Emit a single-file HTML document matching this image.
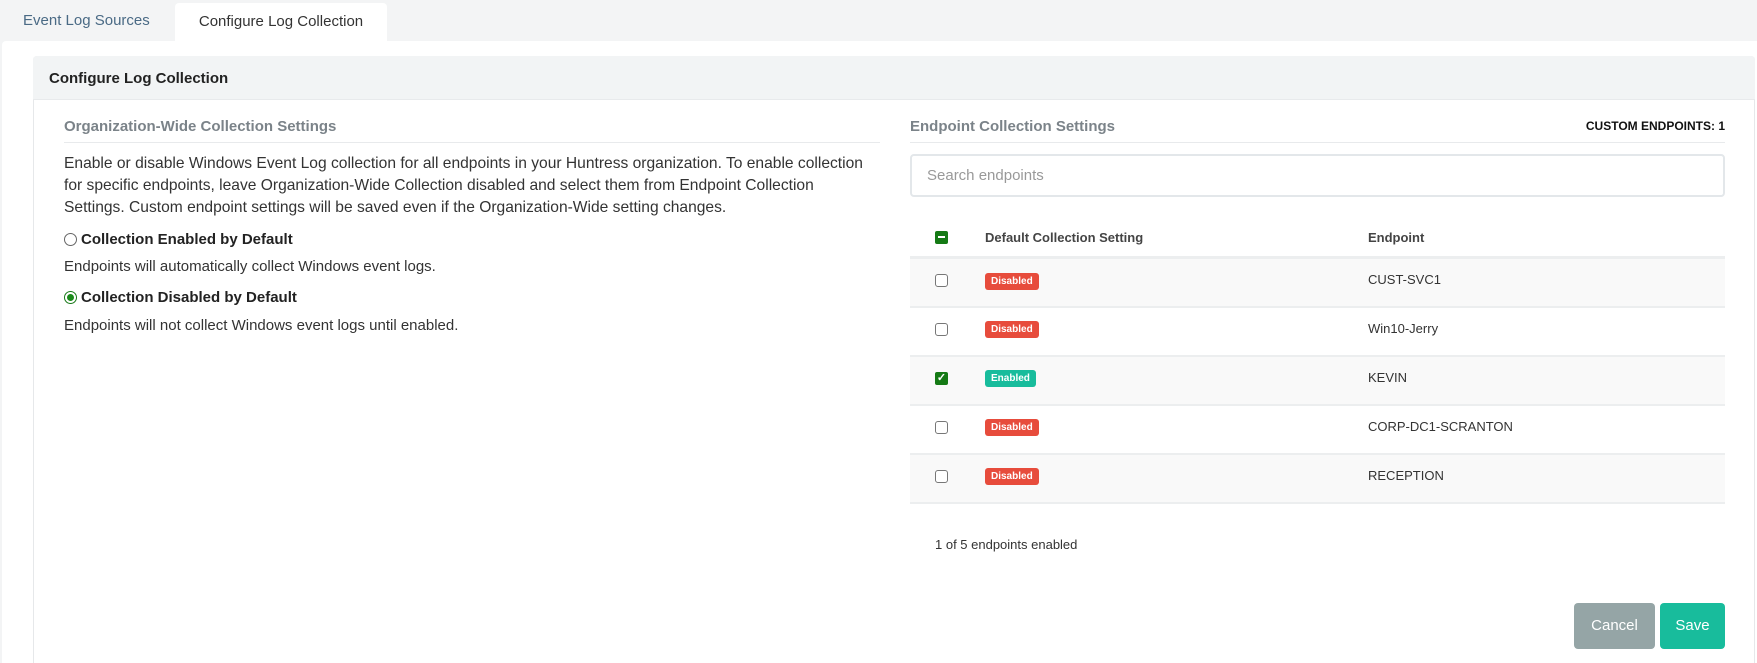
<!DOCTYPE html>
<html><head><meta charset="utf-8"><style>
*{box-sizing:border-box;margin:0;padding:0}
html{height:663px;overflow:hidden}
body{width:1757px;height:663px;overflow:hidden;background:#f3f4f5;font-family:"Liberation Sans",sans-serif;color:#333;position:relative}
.abs{position:absolute}
.tab1{left:23px;top:12px;font-size:15px;color:#4a6a85}
.tab2{left:175px;top:3px;width:212px;height:39px;background:#fff;border-radius:4px 4px 0 0;font-size:15px;color:#333;text-align:center;line-height:38px}
.main{left:2px;top:41px;width:1755px;height:622px;background:#fff;border-radius:4px 0 0 0}
.card{left:33px;top:56px;width:1722px;height:607px;border:1px solid #e6e8ea;border-bottom:none;border-radius:4px 4px 0 0;background:#fff}
.chead{left:33px;top:56px;width:1722px;height:44px;background:#f2f4f5;border-bottom:1px solid #e8eaec;border-radius:4px 4px 0 0;font-weight:bold;font-size:15px;padding:14px 0 0 16px;color:#222}
.h4{font-size:15px;font-weight:bold;color:#7b8389}
.line{height:1px;background:#e8eaec}
p{font-size:15px;line-height:22px;white-space:nowrap}
.badge{display:inline-block;height:17px;line-height:17px;font-size:10px;font-weight:bold;color:#fff;padding:0 6px;border-radius:3px}
.dis{background:#e74c3c}.en{background:#18bc9c}
.cb{width:13px;height:13px;border:1px solid #777;border-radius:3px;background:#fff}
.row{left:910px;width:815px;height:49px}
.btn{height:46px;line-height:46px;color:#fff;font-size:15px;text-align:center;border-radius:4px}
</style></head><body>
<div class="abs tab1">Event Log Sources</div>
<div class="abs tab2">Configure Log Collection</div>
<div class="abs main"></div>
<div class="abs card"></div>
<div class="abs chead">Configure Log Collection</div>

<div class="abs h4" style="left:64px;top:118px">Organization-Wide Collection Settings</div>
<div class="abs line" style="left:64px;top:142px;width:816px"></div>
<p class="abs" style="left:64px;top:153px;font-size:15.6px">Enable or disable Windows Event Log collection for all endpoints in your Huntress organization. To enable collection<br>for specific endpoints, leave Organization-Wide Collection disabled and select them from Endpoint Collection<br>Settings. Custom endpoint settings will be saved even if the Organization-Wide setting changes.</p>
<div class="abs" style="left:64px;top:233px;width:13px;height:13px;border:1px solid #666;border-radius:50%"></div>
<div class="abs" style="left:81px;top:231px;font-size:15px;font-weight:bold;color:#222">Collection Enabled by Default</div>
<p class="abs" style="left:64px;top:256px">Endpoints will automatically collect Windows event logs.</p>
<div class="abs" style="left:64px;top:291px;width:13px;height:13px;border:1px solid #1a7a1a;border-radius:50%;background:#fff"><div style="margin:2px;width:7px;height:7px;border-radius:50%;background:#1a8a1a"></div></div>
<div class="abs" style="left:81px;top:289px;font-size:15px;font-weight:bold;color:#222">Collection Disabled by Default</div>
<p class="abs" style="left:64px;top:315px">Endpoints will not collect Windows event logs until enabled.</p>

<div class="abs h4" style="left:910px;top:118px">Endpoint Collection Settings</div>
<div class="abs" style="right:32px;top:119px;font-size:12px;font-weight:bold;color:#111">CUSTOM ENDPOINTS: 1</div>
<div class="abs line" style="left:910px;top:142px;width:815px"></div>
<div class="abs" style="left:910px;top:154px;width:815px;height:43px;border:2px solid #e3e7ea;border-radius:4px;font-size:15px;color:#999;padding:11px 0 0 15px">Search endpoints</div>

<div class="abs" style="left:935px;top:231px;width:13px;height:13px;background:#157a15;border-radius:2px"><div style="margin:5px 3px;width:7px;height:2px;background:#fff"></div></div>
<div class="abs" style="left:985px;top:230px;font-size:13px;font-weight:bold;color:#444">Default Collection Setting</div>
<div class="abs" style="left:1368px;top:230px;font-size:13px;font-weight:bold;color:#444">Endpoint</div>
<div class="abs" style="left:910px;top:256px;width:815px;height:3px;background:#eceeef"></div>

<div class="abs row" style="top:259px;background:#f9f9f9;border-bottom:2px solid #eceeef"></div>
<div class="abs row" style="top:308px;background:#fff;border-bottom:2px solid #eceeef"></div>
<div class="abs row" style="top:357px;background:#f9f9f9;border-bottom:2px solid #eceeef"></div>
<div class="abs row" style="top:406px;background:#fff;border-bottom:2px solid #eceeef"></div>
<div class="abs row" style="top:455px;background:#f9f9f9;border-bottom:2px solid #eceeef"></div>

<div class="abs cb" style="left:935px;top:274px"></div>
<div class="abs badge dis" style="left:985px;top:273px">Disabled</div>
<div class="abs" style="left:1368px;top:272px;font-size:13px">CUST-SVC1</div>

<div class="abs cb" style="left:935px;top:323px"></div>
<div class="abs badge dis" style="left:985px;top:321px">Disabled</div>
<div class="abs" style="left:1368px;top:321px;font-size:13px">Win10-Jerry</div>

<div class="abs" style="left:935px;top:372px;width:13px;height:13px;background:#157a15;border-radius:2px;color:#fff;font-size:11px;line-height:13px;text-align:center;font-weight:bold">✓</div>
<div class="abs badge en" style="left:985px;top:370px">Enabled</div>
<div class="abs" style="left:1368px;top:370px;font-size:13px">KEVIN</div>

<div class="abs cb" style="left:935px;top:421px"></div>
<div class="abs badge dis" style="left:985px;top:419px">Disabled</div>
<div class="abs" style="left:1368px;top:419px;font-size:13px">CORP-DC1-SCRANTON</div>

<div class="abs cb" style="left:935px;top:470px"></div>
<div class="abs badge dis" style="left:985px;top:468px">Disabled</div>
<div class="abs" style="left:1368px;top:468px;font-size:13px">RECEPTION</div>

<div class="abs" style="left:935px;top:537px;font-size:13px">1 of 5 endpoints enabled</div>
<div class="abs btn" style="left:1574px;top:603px;width:81px;background:#95a5a6">Cancel</div>
<div class="abs btn" style="left:1660px;top:603px;width:65px;background:#18bc9c">Save</div>
</body></html>
